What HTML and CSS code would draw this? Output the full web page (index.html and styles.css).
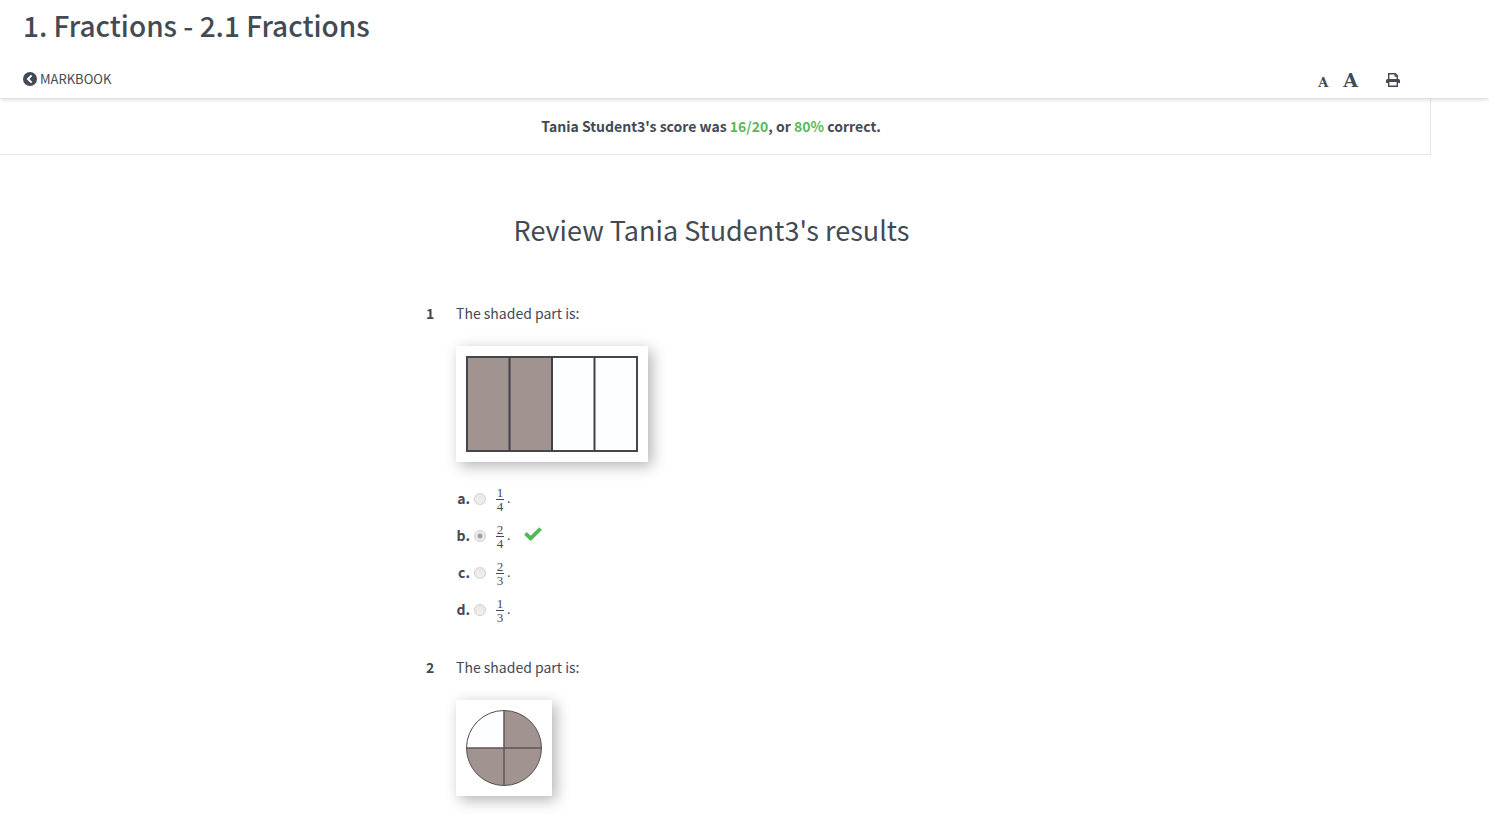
FILE: index.html
```html
<!DOCTYPE html>
<html lang="en">
<head>
  <meta charset="UTF-8" />
  <meta name="viewport" content="width=device-width, initial-scale=1.0" />
  <title>1. Fractions - 2.1 Fractions</title>
  <link rel="stylesheet" href="styles.css">
</head>
<body>
  <header>
    <h1>1. Fractions - 2.1 Fractions</h1>
    <div class="toolbar">
      <a href="#" class="back">
        <svg width="14" height="14" viewBox="0 0 14 14" aria-hidden="true">
          <circle cx="7" cy="7" r="7" fill="currentColor" />
          <path d="M8.6 3.4 5 7l3.6 3.6" fill="none" stroke="#fff" stroke-width="2" />
        </svg>
        MARKBOOK
      </a>
      <div class="tools">
        <button class="small-text" title="Smaller text">A</button>
        <button class="large-text" title="Larger text">A</button>
        <button class="print" title="Print">
          <svg width="14" height="14" viewBox="0 0 14 14" aria-hidden="true">
            <path d="M2.7 6V.7h6.6l2 2V6" fill="none" stroke="currentColor" stroke-width="1.4" />
            <path d="M8.5.5v3.3h3.3z" fill="currentColor" />
            <path d="M1.5 6h11A1.5 1.5 0 0 1 14 7.5V10h-2.5V9h-9v1H0V7.5A1.5 1.5 0 0 1 1.5 6z" fill="currentColor" />
            <path d="M2.7 9v4.3h8.6V9" fill="none" stroke="currentColor" stroke-width="1.4" />
          </svg>
        </button>
      </div>
    </div>
  </header>

  <main>
    <p class="score">Tania Student3's score was <span>16/20</span>, or <span>80%</span> correct.</p>
    <h2>Review Tania Student3's results</h2>

    <ol class="questions">
      <li class="question">
        <span class="number">1</span>
        <div>
          <p id="q1">The shaded part is:</p>
          <svg class="figure" width="172" height="96" viewBox="0 0 172 96" role="img" aria-label="Rectangle in four parts, two shaded">
            <rect x="1" y="1" width="170" height="94" fill="#fcfeff" />
            <rect x="1" y="1" width="85" height="94" fill="#a1938f" />
            <rect x="1" y="1" width="170" height="94" fill="none" stroke="#46474b" stroke-width="2" />
            <path d="M43.5 1v94M86 1v94M128.5 1v94" stroke="#414145" stroke-width="2" />
          </svg>
          <div class="answers" role="radiogroup" aria-labelledby="q1">
            <label><b>a.</b><input type="radio" name="q1" disabled><span class="fraction"><span>1</span><span>4</span></span><span class="dot">.</span></label>
            <label><b>b.</b><input type="radio" name="q1" checked disabled><span class="fraction"><span>2</span><span>4</span></span><span class="dot">.</span>
              <svg class="tick" width="18" height="14" viewBox="0 0 18 14" aria-label="Correct">
                <path d="M1.4 6.3 6.7 11.4 16.6 1.7" fill="none" stroke="#53b956" stroke-width="3.8" />
              </svg>
            </label>
            <label><b>c.</b><input type="radio" name="q1" disabled><span class="fraction"><span>2</span><span>3</span></span><span class="dot">.</span></label>
            <label><b>d.</b><input type="radio" name="q1" disabled><span class="fraction"><span>1</span><span>3</span></span><span class="dot">.</span></label>
          </div>
        </div>
      </li>
      <li class="question">
        <span class="number">2</span>
        <div>
          <p>The shaded part is:</p>
          <svg class="figure" width="76" height="76" viewBox="0 0 76 76" role="img" aria-label="Circle in four parts, three shaded">
            <circle cx="38" cy="38" r="37.5" fill="#a1938f" />
            <path d="M38 38H.5A37.5 37.5 0 0 1 38 .5z" fill="#fcfeff" />
            <circle cx="38" cy="38" r="37.5" fill="none" stroke="#55504f" />
            <path d="M38 0v76M0 38h76" stroke="#5e5757" stroke-width="1.5" />
          </svg>
        </div>
      </li>
    </ol>
  </main>
</body>
</html>
```
FILE: styles.css
```css
body {
  margin: 0;
  font-family: "Noto Sans CJK SC", sans-serif;
  font-size: 14px;
  line-height: 20px;
  color: #434a54;
  background-color: #fff;
}

header {
  position: relative;
  padding: 4px 23px 5px;
  box-shadow: 0 1px 5px rgba(0, 0, 0, 0.2);
}

h1 {
  margin: 0 0 18px;
  font-size: 28px;
  line-height: 42px;
  font-weight: 500;
}

.toolbar {
  display: flex;
  justify-content: space-between;
  align-items: center;
}

.back {
  display: flex;
  align-items: center;
  gap: 3px;
  font-size: 13px;
  color: inherit;
  text-decoration: none;
}

.tools {
  display: flex;
  align-items: baseline;
  margin: 6px 66px 0 0;
}

.tools button {
  padding: 0;
  border: none;
  background: none;
  color: inherit;
  font-family: "DejaVu Serif", serif;
  font-weight: bold;
  line-height: 20px;
  cursor: pointer;
}

.tools .small-text {
  font-size: 13px;
  margin-right: 15px;
}

.tools .large-text {
  font-size: 19px;
}

.tools .print {
  margin-left: 28px;
}

.print svg {
  display: block;
}

main {
  margin-right: 58px;
}

.score {
  margin: 0;
  padding: 18px 8px 18px 0;
  border: solid #e6e6e6;
  border-width: 0 1px 1px 0;
  text-align: center;
  font-weight: bold;
}

.score span {
  color: #5cb85c;
}

h2 {
  margin: 55px 8px 53px 0;
  font-size: 27px;
  line-height: 40px;
  font-weight: 400;
  text-align: center;
}

.questions {
  max-width: 570px;
  margin: 0 auto;
  padding: 0 9px 0 0;
  list-style: none;
}

.question {
  display: flex;
  margin-bottom: 29px;
}

.number {
  width: 30px;
  font-weight: bold;
}

.question p {
  margin: 0 0 23px;
}

.figure {
  display: block;
  padding: 10px;
  background-color: #fff;
  box-shadow: 4px 4px 14px rgba(0, 0, 0, 0.3);
}

.answers {
  padding-top: 18px;
}

.answers label {
  display: flex;
  align-items: center;
  height: 37px;
}

.answers b {
  width: 14px;
  line-height: 18px;
  padding-bottom: 2px;
  text-align: right;
}

.answers input {
  appearance: none;
  width: 12px;
  height: 12px;
  margin: 0 10px 0 4px;
  border: 1px solid #cfcfcf;
  border-radius: 50%;
  background: linear-gradient(#e8e8e8, #f0f0f0);
}

.answers input:checked {
  background: radial-gradient(circle, #a0a0a0 2px, #ececec 3px);
}

.fraction {
  display: flex;
  flex-direction: column;
  width: 8px;
  padding-top: 2px;
  font-family: "Liberation Serif", serif;
  font-size: 13px;
  line-height: 13px;
  text-align: center;
}

.fraction span:first-child {
  border-bottom: 1px solid #434a54;
}

.dot {
  width: 17px;
  padding-left: 3px;
  font-family: "Liberation Serif", serif;
}

.tick {
  padding-bottom: 3px;
}
```
